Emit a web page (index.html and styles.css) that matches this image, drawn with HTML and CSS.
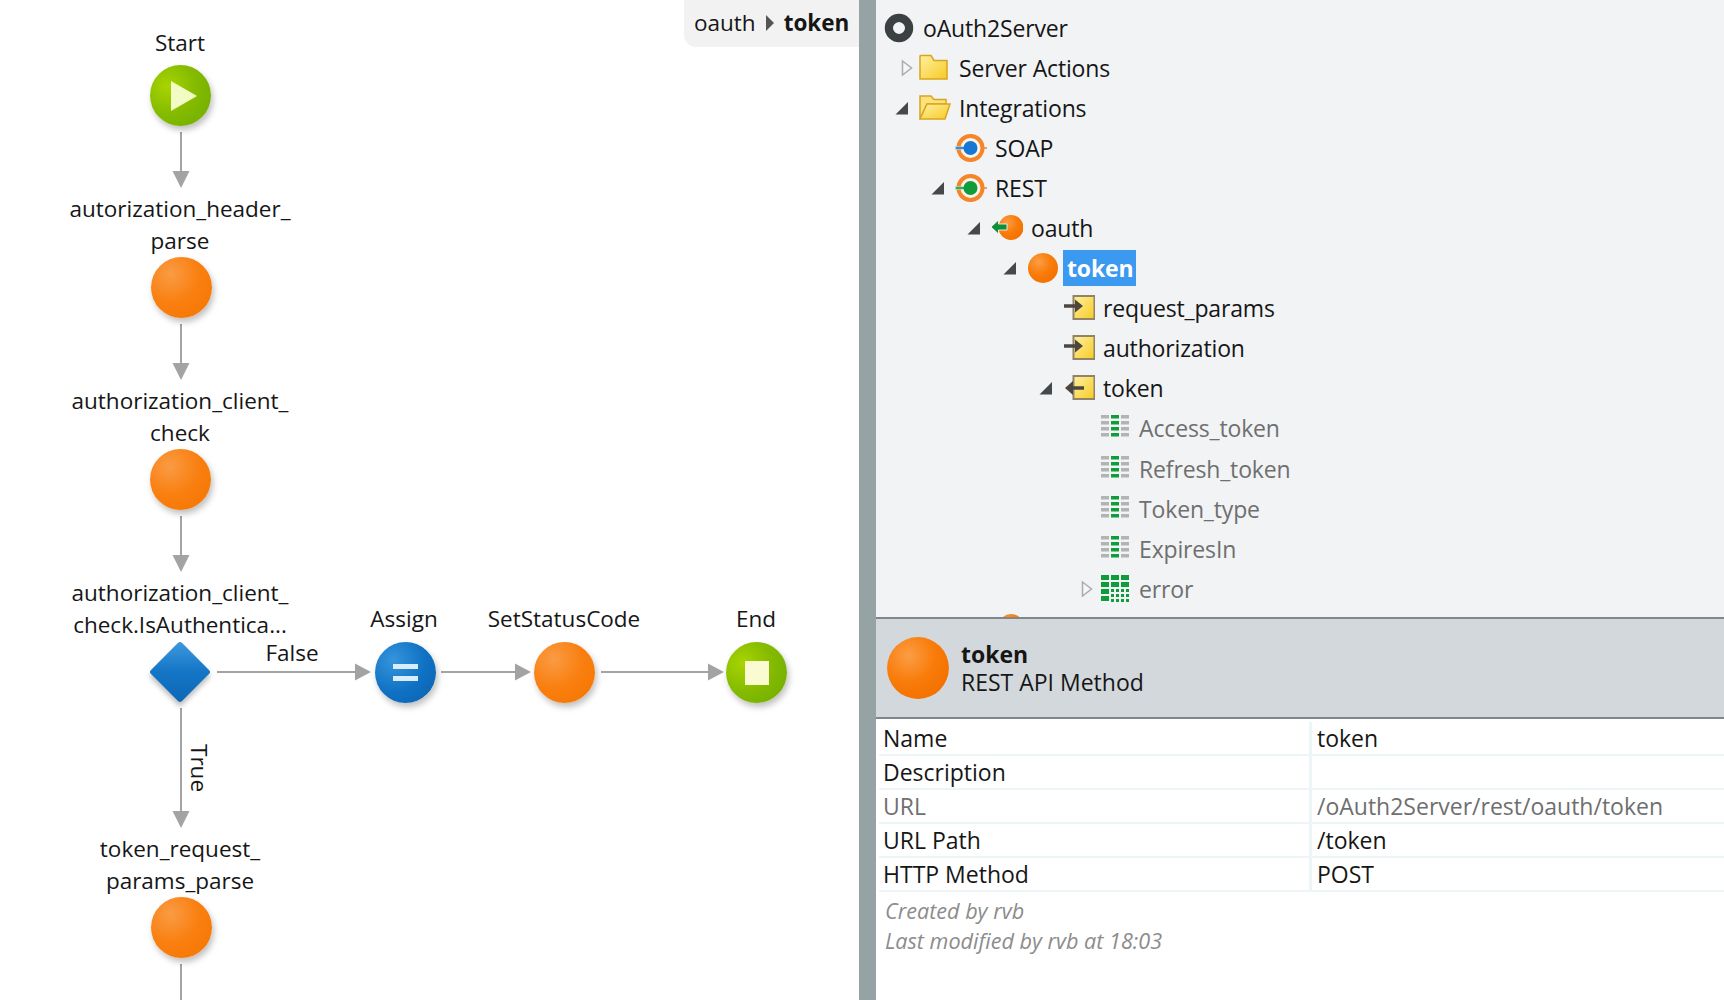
FILE: index.html
```html
<!DOCTYPE html>
<html lang="en">
<head>
<meta charset="utf-8">
<title>oAuth2Server - token</title>
<link rel="stylesheet" href="styles.css">
</head>
<body>
<svg class="sprite" aria-hidden="true">
  <defs>
    <linearGradient id="gYellow" x1="0" y1="0" x2="1" y2="1"><stop offset="0" stop-color="#fff0a0"/><stop offset="1" stop-color="#f6cb25"/></linearGradient>
    <radialGradient id="gOrange" cx=".35" cy=".3" r=".7"><stop offset="0" stop-color="#fb9d45"/><stop offset=".6" stop-color="#f97c0a"/><stop offset="1" stop-color="#f47200"/></radialGradient>
    <symbol id="i-server" viewBox="0 0 32 32"><circle cx="16" cy="16" r="10" fill="none" stroke="#3b4043" stroke-width="8.5"/><circle cx="16" cy="16" r="5.8" fill="#f1f3f5"/></symbol>
    <symbol id="i-folder" viewBox="0 0 32 32"><path d="M1 4V27H28V8.500H15L12 3.500H2Z" fill="url(#gYellow)" stroke="#d9a521" stroke-width="1.500"/></symbol>
    <symbol id="i-folder-open" viewBox="0 0 32 32"><path d="M1 4H12L15 7.500H27V12H8L1 27Z" fill="#fbe27a" stroke="#d9a521" stroke-width="1.500"/><path d="M1 27L8 12H31L26 27Z" fill="url(#gYellow)" stroke="#d9a521" stroke-width="1.500"/></symbol>
    <symbol id="i-soap" viewBox="0 0 32 32"><circle cx="15.500" cy="16" r="12" fill="#fbf3ea" stroke="#f5852a" stroke-width="4"/><path d="M29 16h3" stroke="#f5852a" stroke-width="1.500"/><path d="M0 16h10" stroke="#a9cdea" stroke-width="3.500"/><path d="M1 16h9" stroke="#1a78c8" stroke-width="1.500"/><circle cx="15.500" cy="16" r="7" fill="#1478d4"/></symbol>
    <symbol id="i-rest" viewBox="0 0 32 32"><circle cx="15.500" cy="16" r="12" fill="#fbf3ea" stroke="#f5852a" stroke-width="4"/><path d="M29 16h3" stroke="#f5852a" stroke-width="1.500"/><path d="M0 16h10" stroke="#a9dcb8" stroke-width="3.500"/><path d="M1 16h9" stroke="#129a3c" stroke-width="1.500"/><circle cx="15.500" cy="16" r="7" fill="#0f9c3a"/></symbol>
    <symbol id="i-oauth" viewBox="0 0 32 32"><circle cx="20" cy="15.500" r="12.500" fill="url(#gOrange)"/><path d="M0 15L7.500 8V12H16V18H7.500V22Z" fill="#0f8f3a" stroke="#fff" stroke-width=".8"/></symbol>
    <symbol id="i-method" viewBox="0 0 32 32"><circle cx="16" cy="16" r="15" fill="url(#gOrange)"/></symbol>
    <symbol id="i-in" viewBox="0 0 32 32"><rect x="10.500" y="4" width="21" height="23" fill="url(#gYellow)" stroke="#8f8468" stroke-width="2"/><path d="M1 14h14" stroke="#4c4641" stroke-width="3.500"/><path d="M12 7.500L20 14L12 20.500Z" fill="#4c4641"/></symbol>
    <symbol id="i-out" viewBox="0 0 32 32"><rect x="10.500" y="4" width="21" height="23" fill="url(#gYellow)" stroke="#8f8468" stroke-width="2"/><path d="M8 16h13" stroke="#4c4641" stroke-width="3.500"/><path d="M10 9L2 16L10 23Z" fill="#4c4641"/></symbol>
    <symbol id="i-attr" viewBox="0 0 32 32"><g fill="#b3b3b3"><path d="M2 3h8v3.500H2zM2 9h8v3.500H2zM2 15h8v3.500H2zM2 21h8v3.500H2zM22 3h8v3.500h-8zM22 9h8v3.500h-8zM22 15h8v3.500h-8zM22 21h8v3.500h-8z"/></g><g fill="#0f9c3a"><path d="M12 3h8v3.500h-8zM12 9h8v3.500h-8zM12 15h8v3.500h-8zM12 21h8v3.500h-8z"/></g></symbol>
    <symbol id="i-struct" viewBox="0 0 32 32"><g fill="#0f9c3a"><path d="M2 2h8v5H2zM12 2h8v5h-8zM22 2h8v5h-8zM2 9h8v5H2zM12 9h8v5h-8zM22 9h8v5h-8zM2 16h8v5H2zM2 23h8v5H2z"/><path d="M12 16h3v3h-3zM17 16h3v3h-3zM22 16h3v3h-3zM27 16h3v3h-3zM12 21h3v3h-3zM17 21h3v3h-3zM22 21h3v3h-3zM27 21h3v3h-3zM12 26h3v3h-3zM17 26h3v3h-3zM22 26h3v3h-3zM27 26h3v3h-3z"/></g></symbol>
    <symbol id="t-open" viewBox="0 0 14 14"><path d="M0.500 13.500L13 1V13.500Z" fill="#45494c"/></symbol>
    <symbol id="t-closed" viewBox="0 0 14 18"><path d="M2.500 2L11.500 9L2.500 16Z" fill="#f5f6f7" stroke="#a9adb0" stroke-width="1.500"/></symbol>
  </defs>
</svg>

<div class="app">
  <section class="canvas">
    <svg class="wires" viewBox="0 0 859 1000" aria-hidden="true">
      <g class="wire">
        <path d="M181 132V172"/><path d="M181 324V364"/><path d="M181 516V556"/>
        <path d="M181 708V812"/><path d="M181 964V1000"/>
        <path d="M217 672H356"/><path d="M441 672H516"/><path d="M601 672H709"/>
      </g>
      <g class="head">
        <path d="M172.500 171H189.500L181 188Z"/><path d="M172.500 363H189.500L181 380Z"/><path d="M172.500 555H189.500L181 572Z"/><path d="M172.500 811H189.500L181 828Z"/>
        <path d="M355 663.500V680.500L371 672Z"/><path d="M515 663.500V680.500L531 672Z"/><path d="M708 663.500V680.500L724 672Z"/>
      </g>
    </svg>

    <div class="label l-start">Start</div>
    <div class="ball green n-start"><span class="play"></span></div>

    <div class="label l-hdr">autorization_header_<br>parse</div>
    <div class="ball orange n-hdr"></div>

    <div class="label l-chk">authorization_client_<br>check</div>
    <div class="ball orange n-chk"></div>

    <div class="label l-auth">authorization_client_<br>check.IsAuthentica...</div>
    <div class="diamond"></div>

    <div class="label l-false">False</div>
    <div class="label l-true">True</div>

    <div class="label l-assign">Assign</div>
    <div class="ball blue n-assign"><span class="equals"></span></div>

    <div class="label l-status">SetStatusCode</div>
    <div class="ball orange n-status"></div>

    <div class="label l-end">End</div>
    <div class="ball green n-end"><span class="stop"></span></div>

    <div class="label l-tok">token_request_<br>params_parse</div>
    <div class="ball orange n-tok"></div>

    <div class="crumb"><span>oauth</span><span class="crumb-sep"></span><strong>token</strong></div>
  </section>

  <div class="splitter"></div>

  <section class="side">
    <div class="tree">
      <div class="row d0"><svg class="ic"><use href="#i-server"/></svg><span class="txt">oAuth2Server</span></div>
      <div class="row d1"><svg class="tw closed"><use href="#t-closed"/></svg><svg class="ic"><use href="#i-folder"/></svg><span class="txt">Server Actions</span></div>
      <div class="row d1"><svg class="tw"><use href="#t-open"/></svg><svg class="ic"><use href="#i-folder-open"/></svg><span class="txt">Integrations</span></div>
      <div class="row d2"><svg class="ic"><use href="#i-soap"/></svg><span class="txt">SOAP</span></div>
      <div class="row d2"><svg class="tw"><use href="#t-open"/></svg><svg class="ic"><use href="#i-rest"/></svg><span class="txt">REST</span></div>
      <div class="row d3"><svg class="tw"><use href="#t-open"/></svg><svg class="ic"><use href="#i-oauth"/></svg><span class="txt">oauth</span></div>
      <div class="row d4"><svg class="tw"><use href="#t-open"/></svg><svg class="ic"><use href="#i-method"/></svg><span class="sel">token</span></div>
      <div class="row d5"><svg class="ic"><use href="#i-in"/></svg><span class="txt">request_params</span></div>
      <div class="row d5"><svg class="ic"><use href="#i-in"/></svg><span class="txt">authorization</span></div>
      <div class="row d5"><svg class="tw"><use href="#t-open"/></svg><svg class="ic"><use href="#i-out"/></svg><span class="txt">token</span></div>
      <div class="row d6 muted"><svg class="ic"><use href="#i-attr"/></svg><span class="txt">Access_token</span></div>
      <div class="row d6 muted"><svg class="ic"><use href="#i-attr"/></svg><span class="txt">Refresh_token</span></div>
      <div class="row d6 muted"><svg class="ic"><use href="#i-attr"/></svg><span class="txt">Token_type</span></div>
      <div class="row d6 muted"><svg class="ic"><use href="#i-attr"/></svg><span class="txt">ExpiresIn</span></div>
      <div class="row d6 muted"><svg class="tw closed"><use href="#t-closed"/></svg><svg class="ic"><use href="#i-struct"/></svg><span class="txt">error</span></div>
      <div class="row d3 peek"><svg class="ic"><use href="#i-oauth"/></svg></div>
    </div>

    <header class="head-panel">
      <svg class="head-ic"><use href="#i-method"/></svg>
      <div class="head-text"><strong>token</strong><span>REST API Method</span></div>
    </header>

    <div class="props">
      <div class="k">Name</div><div class="v">token</div>
      <div class="k">Description</div><div class="v"></div>
      <div class="k muted">URL</div><div class="v muted">/oAuth2Server/rest/oauth/token</div>
      <div class="k">URL Path</div><div class="v">/token</div>
      <div class="k">HTTP Method</div><div class="v">POST</div>
    </div>

    <footer class="meta">
      <div>Created by rvb</div>
      <div>Last modified by rvb at 18:03</div>
    </footer>
  </section>
</div>
</body>
</html>
```

FILE: styles.css
```css
* { box-sizing: border-box; }

html, body {
  margin: 0;
  height: 100%;
  background: #fff;
  overflow: hidden;
}

body {
  font-family: "Open Sans", "Noto Sans", sans-serif;
  font-size: 23px;
  color: #161616;
}

.sprite { position: absolute; width: 0; height: 0; }

.app { display: flex; height: 1000px; }

/* ---------- flow canvas ---------- */
.canvas {
  position: relative;
  width: 859px;
  height: 1000px;
  flex: none;
  overflow: hidden;
  background: #fff;
}

.wires { position: absolute; inset: 0; width: 859px; height: 1000px; }
.wire path { stroke: #a3a3a3; stroke-width: 2; fill: none; }
.head path { fill: #a3a3a3; }

.label {
  position: absolute;
  width: 320px;
  text-align: center;
  line-height: 32px;
  white-space: nowrap;
  font-size: 22.500px;
}

.l-start  { left: 20px;  top: 27px; }
.l-hdr    { left: 20px;  top: 193px; }
.l-chk    { left: 20px;  top: 385px; }
.l-auth   { left: 20px;  top: 577px; }
.l-tok    { left: 20px;  top: 833px; }
.l-assign { left: 244px; top: 603px; }
.l-status { left: 404px; top: 603px; }
.l-end    { left: 596px; top: 603px; }
.l-false  { left: 132px; top: 637px; }
.l-true {
  left: 183px;
  top: 744px;
  width: 32px;
  height: 44px;
  writing-mode: vertical-rl;
  text-align: center;
}

.ball {
  position: absolute;
  width: 61px;
  height: 61px;
  border-radius: 50%;
  box-shadow: 2px 4px 6px rgba(0, 0, 0, .25);
  display: flex;
  align-items: center;
  justify-content: center;
}
.orange { background: radial-gradient(circle at 32% 28%, #fa9b44 0, #f97f10 48%, #f57500 100%); }
.green  { background: radial-gradient(circle at 28% 35%, #a8d400 0, #86bc00 45%, #6dab00 100%); }
.blue   { background: radial-gradient(circle at 30% 30%, #3494dc 0, #0f70c2 55%, #0a62ae 100%); }

.n-start  { left: 150px; top: 65px; }
.n-hdr    { left: 151px; top: 257px; }
.n-chk    { left: 150px; top: 449px; }
.n-tok    { left: 151px; top: 897px; }
.n-assign { left: 375px; top: 642px; }
.n-status { left: 534px; top: 642px; }
.n-end    { left: 726px; top: 642px; }

.play {
  width: 0;
  height: 0;
  margin-left: 6px;
  border-left: 26px solid #f3fbc4;
  border-top: 15px solid transparent;
  border-bottom: 15px solid transparent;
}
.stop { width: 24px; height: 24px; background: #fbfbd2; }
.equals {
  width: 25px;
  height: 17px;
  border-top: 5px solid #d8ecfb;
  border-bottom: 5px solid #d8ecfb;
}

.diamond {
  position: absolute;
  left: 158px;
  top: 650px;
  width: 44px;
  height: 44px;
  border-radius: 3px;
  transform: rotate(45deg);
  background: linear-gradient(135deg, #3f9ade 0, #1475c6 50%, #0e67b5 100%);
  box-shadow: 3px 3px 5px rgba(0, 0, 0, .25);
}

.crumb {
  position: absolute;
  right: 0;
  top: 0;
  width: 175px;
  height: 47px;
  padding: 0 0 2px 10px;
  display: flex;
  align-items: center;
  white-space: nowrap;
  background: #f2f2f2;
  border-bottom-left-radius: 12px;
  font-size: 22.500px;
}
.crumb-sep {
  width: 0;
  height: 0;
  margin: 0 10px;
  border-left: 8px solid #555;
  border-top: 8px solid transparent;
  border-bottom: 8px solid transparent;
}
.crumb strong { font-weight: 700; }

/* ---------- splitter ---------- */
.splitter { width: 17px; flex: none; background: #96a3a4; }

/* ---------- right column ---------- */
.side { flex: 1; min-width: 0; display: flex; flex-direction: column; background: #fff; }

.tree {
  height: 617px;
  flex: none;
  padding-top: 8px;
  overflow: hidden;
  letter-spacing: -.15px;
  background: #f1f3f5;
}

.row {
  display: flex;
  align-items: center;
  height: 40.050px;
  white-space: nowrap;
}
.peek { padding-bottom: 3px; }
.d0 { padding-left: 7px; }
.d1 { padding-left: 43px; }
.d2 { padding-left: 79px; }
.d3 { padding-left: 115px; }
.d4 { padding-left: 151px; }
.d5 { padding-left: 187px; }
.d6 { padding-left: 223px; }

.ic { width: 32px; height: 32px; flex: none; }
.tw { width: 14px; height: 14px; flex: none; margin-left: -24px; margin-right: 10px; }
.tw.closed { height: 18px; margin-left: -19px; margin-right: 5px; }
.txt { margin-left: 8px; }
.muted { color: #6f6f6f; }

.sel {
  margin-left: 4px;
  height: 36px;
  line-height: 36px;
  padding: 0 3px 0 4px;
  font-weight: 700;
  color: #fff;
  background: #3b99f0;
}

.head-panel {
  height: 102px;
  flex: none;
  display: flex;
  align-items: center;
  gap: 10px;
  padding-left: 9px;
  border-top: 2px solid #7f8788;
  border-bottom: 2px solid #7f8788;
  background: #d3d8dc;
}
.head-ic { width: 66px; height: 66px; flex: none; }
.head-text { display: flex; flex-direction: column; line-height: 28px; }
.head-text strong { font-weight: 700; }

.props {
  display: grid;
  grid-template-columns: 433px 1fr;
  padding: 3px 0 0 3px;
}
.k, .v { height: 34px; line-height: 33px; border-bottom: 2px solid #eef5f6; }
.k { padding-left: 4px; border-right: 3px solid #eef5f6; }
.v { padding-left: 5px; }

.meta {
  padding: 4px 0 0 9px;
  font-style: italic;
  font-size: 21.600px;
  line-height: 30px;
  color: #8c8c8c;
}
```
